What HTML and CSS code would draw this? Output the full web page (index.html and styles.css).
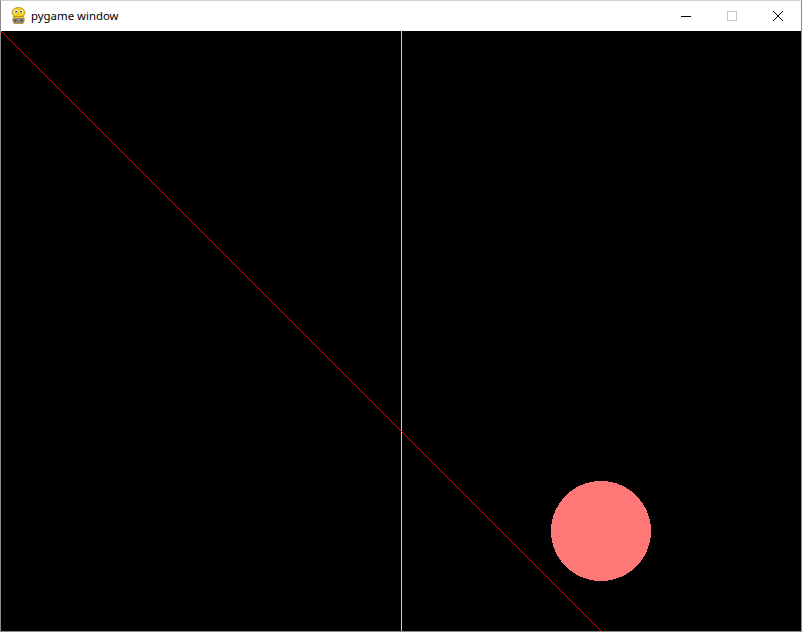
FILE: index.html
```html
<!DOCTYPE html>
<html>
<head>
<meta charset="utf-8">
<link rel="stylesheet" href="styles.css">
</head>
<body>
<div class="window">
  <div class="titlebar">
    <div class="title">
      <svg class="icon" width="17" height="18" viewBox="0 0 16 18">
        <ellipse cx="8" cy="5.5" rx="6.5" ry="5" fill="#f5d020" stroke="#b08a10" stroke-width="0.8"/>
        <circle cx="5.3" cy="4.5" r="1.8" fill="#fff"/>
        <circle cx="10.7" cy="4.5" r="1.8" fill="#fff"/>
        <circle cx="5.6" cy="4.7" r="0.9" fill="#222"/>
        <circle cx="10.4" cy="4.7" r="0.9" fill="#222"/>
        <path d="M3 9.5 Q1 13 3.5 16.5 L12.5 16.5 Q15 13 13 9.5 Z" fill="#f5d020" stroke="#b08a10" stroke-width="0.8"/>
        <rect x="2.5" y="11" width="11" height="5" rx="1.5" fill="#8a8a8a"/>
        <circle cx="5" cy="13.5" r="1.1" fill="#444"/>
        <circle cx="11" cy="13.5" r="1.1" fill="#444"/>
      </svg>
      <span>pygame window</span>
    </div>
    <div class="controls">
      <div class="ctl">
        <svg width="10" height="10" viewBox="0 0 10 10"><path d="M0 5.5H10" stroke="#000" stroke-width="1"/></svg>
      </div>
      <div class="ctl">
        <svg width="10" height="10" viewBox="0 0 10 10"><rect x="0.5" y="0.5" width="9" height="9" fill="none" stroke="#c8c8c8" stroke-width="1"/></svg>
      </div>
      <div class="ctl">
        <svg width="10" height="10" viewBox="0 0 10 10"><path d="M0 0L10 10M10 0L0 10" stroke="#000" stroke-width="1"/></svg>
      </div>
    </div>
  </div>
  <svg class="canvas" width="800" height="600" viewBox="0 0 800 600" shape-rendering="crispEdges">
    <rect width="800" height="600" fill="#000"/>
    <rect x="400" y="0" width="1" height="600" fill="#ffbcbc"/>
    <line x1="0" y1="0" x2="600" y2="600" stroke="#ff0000" stroke-width="1" shape-rendering="auto"/>
    <circle cx="600" cy="500" r="50" fill="#ff7878"/>
  </svg>
</div>
</body>
</html>
```

FILE: styles.css
```css
html, body {
  margin: 0;
  padding: 0;
  background: #ffffff;
}
.window {
  width: 802px;
  height: 632px;
  box-sizing: border-box;
  border: 1px solid #8a8a8a;
  border-top-color: #cfcfcf;
  display: flex;
  flex-direction: column;
  overflow: hidden;
}
.titlebar {
  height: 30px;
  background: #ffffff;
  display: flex;
  align-items: center;
  justify-content: space-between;
}
.title {
  display: flex;
  align-items: center;
  gap: 4px;
  padding-left: 9px;
  font-family: "Noto Sans", "Open Sans", sans-serif;
  font-size: 11.4px;
  color: #000;
}
.title span {
  margin-top: -1px;
}
.icon {
  display: block;
}
.controls {
  display: flex;
  height: 100%;
}
.ctl {
  width: 46px;
  height: 100%;
  display: flex;
  align-items: center;
  justify-content: center;
}
.ctl svg {
  display: block;
}
.canvas {
  display: block;
  width: 800px;
  height: 600px;
}
```
